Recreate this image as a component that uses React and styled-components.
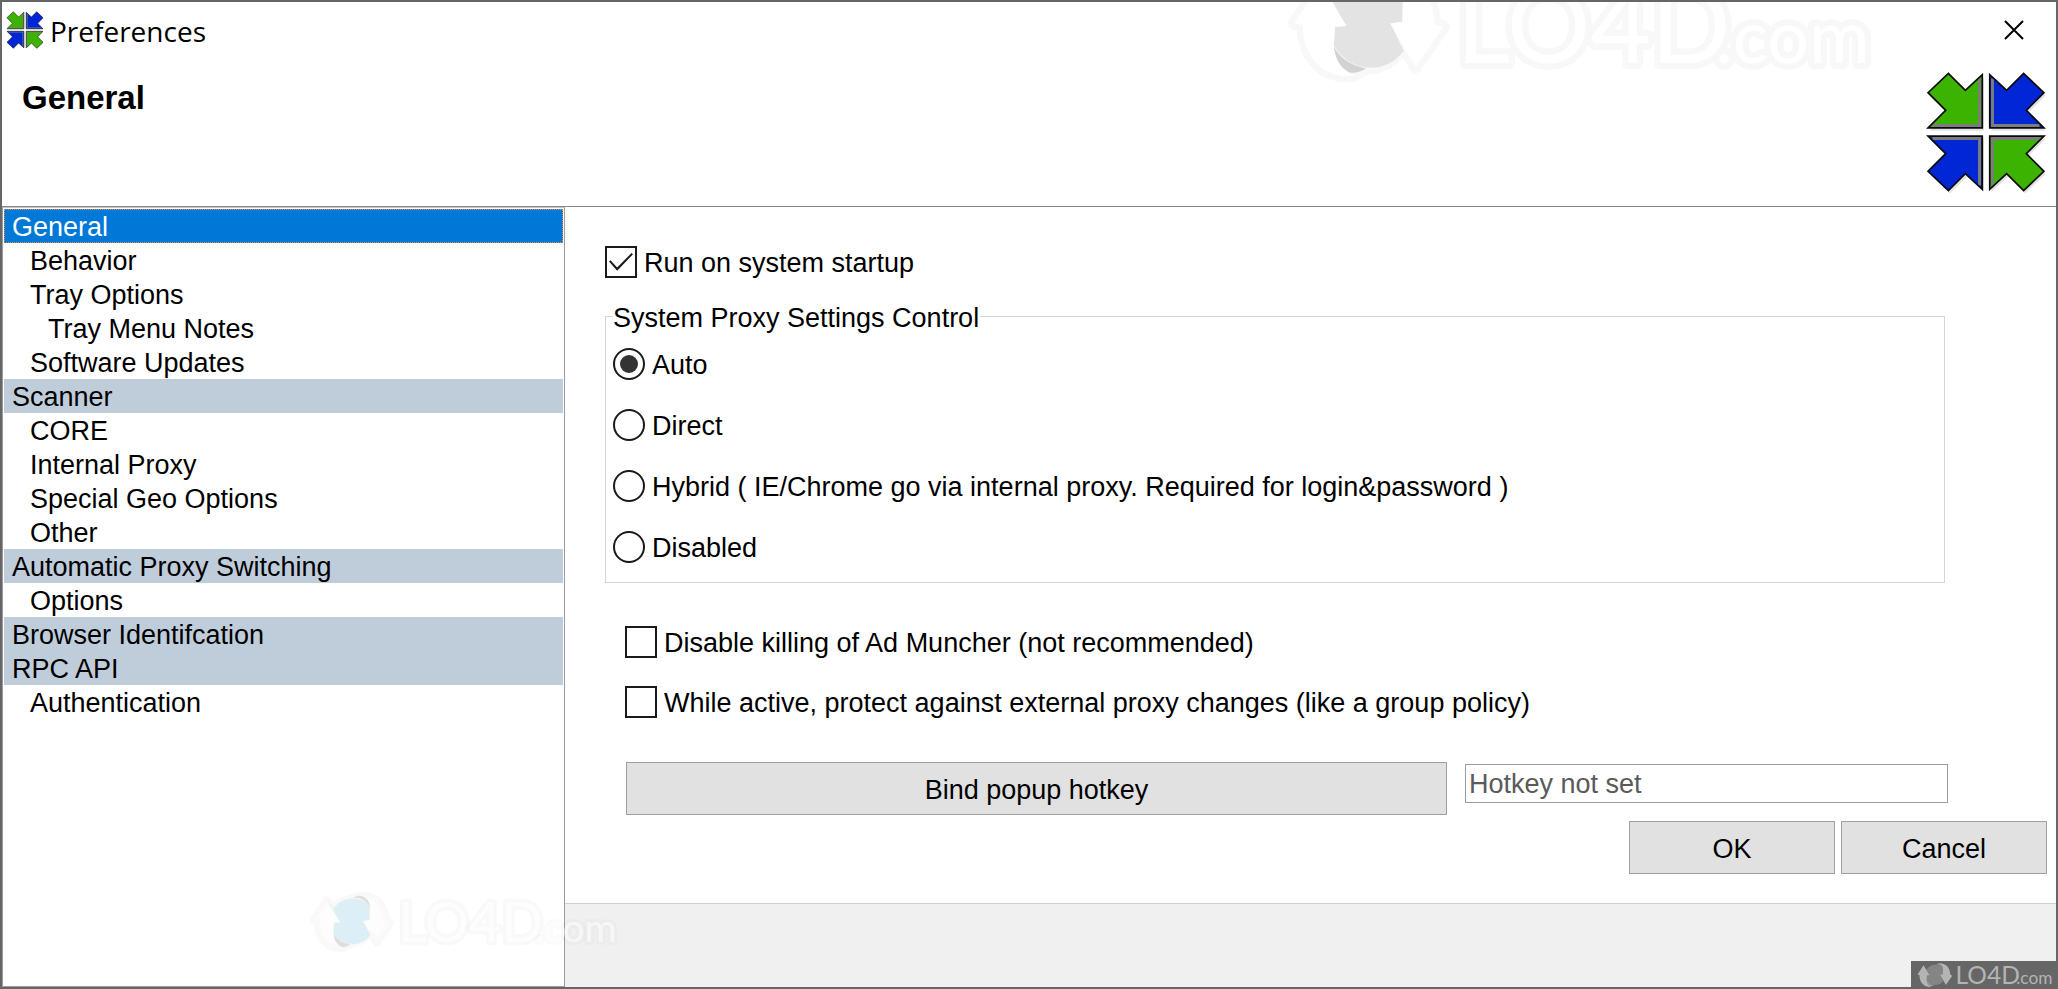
import React, { useState } from "react";
import styled, { createGlobalStyle, css } from "styled-components";

const GlobalStyle = createGlobalStyle`
  *,
  *::before,
  *::after {
    box-sizing: border-box;
  }

  body {
    margin: 0;
    font: 27px/34px "Liberation Sans", Arial, sans-serif;
    color: #000;
    background-color: #fff;
  }

  button,
  input {
    font: inherit;
    color: inherit;
  }
`;

const SECTIONS = [
  { name: "General", level: 0 },
  { name: "Behavior", level: 1 },
  { name: "Tray Options", level: 1 },
  { name: "Tray Menu Notes", level: 2 },
  { name: "Software Updates", level: 1 },
  { name: "Scanner", level: 0 },
  { name: "CORE", level: 1 },
  { name: "Internal Proxy", level: 1 },
  { name: "Special Geo Options", level: 1 },
  { name: "Other", level: 1 },
  { name: "Automatic Proxy Switching", level: 0 },
  { name: "Options", level: 1 },
  { name: "Browser Identifcation", level: 0 },
  { name: "RPC API", level: 0 },
  { name: "Authentication", level: 1 },
];

const PROXY_MODES = [
  "Auto",
  "Direct",
  "Hybrid ( IE/Chrome go via internal proxy. Required for login&password )",
  "Disabled",
];

const ARROW = "M-11 -169V-12H-171L-119 -64L-171 -116L-111 -173L-61 -123Z";

const LogoArrow = ({ fill, transform }) => (
  <g transform={transform}>
    <path d={ARROW} fill={fill} />
    <path d="M-19 -158V-19H-158" fill="none" stroke="#7c7c7c" strokeWidth="9" />
    <path d={ARROW} fill="none" stroke="#0a0a0a" strokeWidth="5" />
  </g>
);

const Logo = ({ size }) => (
  <svg width={size} height={size} viewBox="-180 -180 360 360" aria-hidden="true">
    <g fill="#e2e2e2" transform="translate(5 8)">
      <path d={ARROW} />
      <path d={ARROW} transform="scale(-1 1)" />
      <path d={ARROW} transform="scale(1 -1)" />
      <path d={ARROW} transform="scale(-1 -1)" />
    </g>
    <LogoArrow fill="#3bb300" />
    <LogoArrow fill="#0026d6" transform="scale(-1 1)" />
    <LogoArrow fill="#0026d6" transform="scale(1 -1)" />
    <LogoArrow fill="#3bb300" transform="scale(-1 -1)" />
  </svg>
);

const Watermark = ({ width, ink, globe, shade, halo }) => (
  <WatermarkSvg width={width} viewBox="50 60 940 190" aria-hidden="true">
    <path
      d="M108 88L66 153L80 155C80 205 110 240 160 236L180 224Q220 222 240 190L259 222L303 158L290 155C286 105 260 70 205 75L180 85Q150 88 130 110Z"
      fill={halo}
      stroke={halo}
      strokeWidth="20"
      strokeLinejoin="round"
    />
    <path
      d="M128 120Q150 86 187 86Q220 86 239 105L238 150L219 153L240 196Q220 223 187 223Q150 222 129 188L131 158L149 157Z"
      fill={globe}
    />
    <path d="M129 190Q145 218 180 224Q170 232 155 231Q130 220 129 190Z" fill={shade} />
    <path d="M239 108Q220 82 188 82Q200 77 215 78Q238 86 239 108Z" fill={shade} />
    <path
      d="M108 88L66 153L80 155C80 205 110 240 160 236C138 226 130 205 129 188L131 158L149 157Z"
      fill={ink}
    />
    <path
      d="M205 75C260 70 286 105 290 155L303 158L259 222L219 153L238 150L239 108C238 92 225 80 205 75Z"
      fill={ink}
    />
    <WatermarkText x="735" y="215" fontSize="117" fill={ink} stroke={halo}>
      .com
    </WatermarkText>
    <WatermarkText x="324" y="215" fontSize="166" fill={ink} stroke={halo}>
      LO4D
    </WatermarkText>
  </WatermarkSvg>
);

const App = () => {
  const [section, setSection] = useState("General");
  const [mode, setMode] = useState("Auto");

  return (
    <Window>
      <GlobalStyle />
      <TitleBar>
        <Logo size={38} />
        <WindowTitle>Preferences</WindowTitle>
        <CloseButton aria-label="Close">
          <svg width="20" height="20" viewBox="0 0 20 20">
            <path d="M1 1L19 19M19 1L1 19" stroke="#000" strokeWidth="2" />
          </svg>
        </CloseButton>
      </TitleBar>
      <Header>
        <Heading>General</Heading>
        <Logo size={122} />
      </Header>
      <Body>
        <Sidebar>
          <SectionList>
            {SECTIONS.map(({ name, level }) => (
              <li key={name}>
                <SectionButton
                  $level={level}
                  $selected={name === section}
                  onClick={() => setSection(name)}
                >
                  {name}
                </SectionButton>
              </li>
            ))}
          </SectionList>
        </Sidebar>
        <Main>
          <Settings>
            <Option>
              <CheckBox type="checkbox" defaultChecked />
              <OptionText>Run on system startup</OptionText>
            </Option>
            <Group>
              <legend>System Proxy Settings Control</legend>
              {PROXY_MODES.map((name) => (
                <Option key={name}>
                  <Radio
                    type="radio"
                    name="proxy-mode"
                    checked={name === mode}
                    onChange={() => setMode(name)}
                  />
                  <OptionText>{name}</OptionText>
                </Option>
              ))}
            </Group>
            <ExtraOptions>
              <Option>
                <CheckBox type="checkbox" />
                <OptionText>Disable killing of Ad Muncher (not recommended)</OptionText>
              </Option>
              <Option>
                <CheckBox type="checkbox" />
                <OptionText>
                  While active, protect against external proxy changes (like a group policy)
                </OptionText>
              </Option>
            </ExtraOptions>
            <HotkeyRow>
              <HotkeyButton>Bind popup hotkey</HotkeyButton>
              <HotkeyInput aria-label="Popup hotkey" defaultValue="Hotkey not set" readOnly />
            </HotkeyRow>
          </Settings>
          <Actions>
            <ActionButton>OK</ActionButton>
            <ActionButton>Cancel</ActionButton>
          </Actions>
          <StatusArea />
        </Main>
      </Body>
      <TopMark>
        <Watermark width={592} ink="#fff" globe="#e3e3e3" shade="#d2d2d2" halo="#f8f8f8" />
      </TopMark>
      <SideMark>
        <Watermark
          width={313}
          ink="rgba(255, 255, 255, 0.6)"
          globe="#dceff7"
          shade="#dedede"
          halo="rgba(128, 128, 128, 0.05)"
        />
      </SideMark>
      <Badge>
        <Watermark width={139} ink="#b4b4b4" globe="#858585" shade="#9a9a9a" halo="none" />
      </Badge>
    </Window>
  );
};

const Window = styled.div`
  position: relative;
  display: flex;
  flex-direction: column;
  min-height: 100vh;
  border: 2px solid #666;
  background-color: #fff;
  overflow: hidden;
`;

const TitleBar = styled.div`
  display: flex;
  align-items: center;
  height: 56px;
  padding-left: 4px;
  padding-right: 32px;
`;

const WindowTitle = styled.span`
  margin-left: 6px;
  padding-top: 1px;
  font-family: "Open Sans", "Noto Sans", sans-serif;
  font-size: 28px;
`;

const CloseButton = styled.button`
  display: flex;
  margin-left: auto;
  padding: 0;
  border: none;
  background: none;
`;

const Header = styled.header`
  display: flex;
  justify-content: space-between;
  align-items: flex-start;
  height: 149px;
  padding: 13px 9px 0 20px;
  border-bottom: 1px solid #868686;
`;

const Heading = styled.h1`
  margin: 9px 0 0;
  font-size: 33px;
  line-height: 36px;
`;

const Body = styled.div`
  flex: 1;
  display: flex;
`;

const Sidebar = styled.nav`
  flex: 0 0 563px;
  padding: 1px;
  border: 1px solid #9a9ca3;
  border-top-color: #c4c4c4;
`;

const SectionList = styled.ul`
  margin: 0;
  padding: 0;
  list-style: none;
`;

const SectionButton = styled.button`
  display: block;
  width: 100%;
  height: 34px;
  padding: 2px 0 0 ${({ $level }) => 8 + $level * 18}px;
  border: none;
  text-align: left;
  line-height: 32px;
  background-color: ${({ $level }) => ($level === 0 ? "#bfcddb" : "transparent")};
  ${({ $selected }) =>
    $selected &&
    css`
      color: #fff;
      background-color: #0078d7;
      outline: 1px dotted #e08a3c;
      outline-offset: -1px;
    `}
`;

const Main = styled.main`
  flex: 1;
  display: flex;
  flex-direction: column;
`;

const Settings = styled.div`
  padding: 39px 108px 0 40px;
`;

const Option = styled.label`
  display: flex;
  align-items: center;
  gap: 7px;
  height: 32px;
`;

const OptionText = styled.span`
  padding-top: 2px;
`;

const controlBox = css`
  appearance: none;
  flex: none;
  display: grid;
  place-content: center;
  width: 32px;
  height: 32px;
  margin: 0;
  border: 2px solid #1a1a1a;
  background-color: #fff;
`;

const CheckBox = styled.input`
  ${controlBox}

  &:checked::before {
    content: "";
    width: 24px;
    height: 18px;
    background-color: #1a1a1a;
    clip-path: polygon(0 47%, 6% 40%, 34% 80%, 94% 0, 100% 7%, 34% 98%);
  }
`;

const Radio = styled.input`
  ${controlBox}
  border-radius: 50%;

  &:checked::before {
    content: "";
    width: 18px;
    height: 18px;
    border-radius: 50%;
    background-color: #333;
  }
`;

const Group = styled.fieldset`
  display: flex;
  flex-direction: column;
  gap: 29px;
  margin: 19px 3px 0 0;
  padding: 13px 7px 19px;
  border: 1px solid #d5d5d5;

  legend {
    padding: 4px 1px 0 0;
  }
`;

const ExtraOptions = styled.div`
  display: flex;
  flex-direction: column;
  gap: 28px;
  margin: 43px 0 44px 20px;
`;

const HotkeyRow = styled.div`
  display: flex;
  align-items: flex-start;
  gap: 18px;
  margin-left: 21px;
`;

const Button = styled.button`
  height: 53px;
  padding: 2px 0 0;
  border: 1px solid #a0a0a0;
  background-color: #e1e1e1;
`;

const HotkeyButton = styled(Button)`
  flex: 819 1 0;
`;

const HotkeyInput = styled.input`
  flex: 475 1 0;
  min-width: 0;
  height: 39px;
  margin-top: 2px;
  padding: 2px 3px 0;
  border: 1px solid #9a9ca3;
  color: #5a5a5a;
`;

const Actions = styled.div`
  display: flex;
  justify-content: flex-end;
  gap: 6px;
  padding: 6px 9px 29px;
`;

const ActionButton = styled(Button)`
  width: 206px;
`;

const StatusArea = styled.div`
  flex: 1;
  min-height: 80px;
  border-top: 1px solid #cfcfcf;
  background-color: #f0f0f0;
`;

const WatermarkSvg = styled.svg`
  display: block;
`;

const WatermarkText = styled.text`
  font-family: Lato, sans-serif;
  paint-order: stroke;
  stroke-width: 20px;
  stroke-linejoin: round;
`;

const Overlay = styled.div`
  position: absolute;
  pointer-events: none;
`;

const TopMark = styled(Overlay)`
  top: -37px;
  right: 180px;
`;

const SideMark = styled(Overlay)`
  left: 305px;
  bottom: 34px;
`;

const Badge = styled(Overlay)`
  right: -2px;
  bottom: -2px;
  padding-left: 4px;
  width: 147px;
  background-color: #666;
`;

export default App;
